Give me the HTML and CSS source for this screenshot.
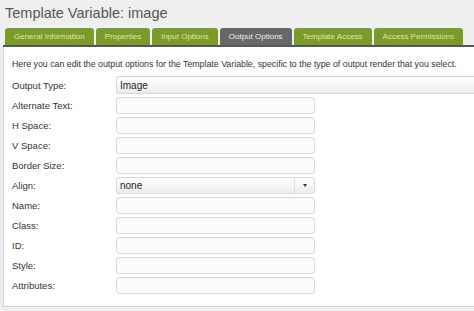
FILE: index.html
```html
<!DOCTYPE html>
<html>
<head>
<meta charset="utf-8">
<title>Template Variable: image</title>
<link rel="stylesheet" href="styles.css">
</head>
<body>
<h1 class="title">Template Variable: image</h1>
<nav class="tabs">
  <span class="tab">General Information</span>
  <span class="tab">Properties</span>
  <span class="tab">Input Options</span>
  <span class="tab active">Output Options</span>
  <span class="tab">Template Access</span>
  <span class="tab">Access Permissions</span>
</nav>
<section class="panel">
  <p class="intro">Here you can edit the output options for the Template Variable, specific to the type of output render that you select.</p>
  <div class="form">
    <div class="row row-type"><label class="lbl">Output Type:</label><div class="combo wide">Image</div></div>
    <div class="row"><label class="lbl">Alternate Text:</label><input class="field" type="text"></div>
    <div class="row"><label class="lbl">H Space:</label><input class="field" type="text"></div>
    <div class="row"><label class="lbl">V Space:</label><input class="field" type="text"></div>
    <div class="row"><label class="lbl">Border Size:</label><input class="field" type="text"></div>
    <div class="row"><label class="lbl">Align:</label><div class="combo select"><span class="sel-text">none</span><span class="sel-btn"><span class="arrow"></span></span></div></div>
    <div class="row"><label class="lbl">Name:</label><input class="field" type="text"></div>
    <div class="row"><label class="lbl">Class:</label><input class="field" type="text"></div>
    <div class="row"><label class="lbl">ID:</label><input class="field" type="text"></div>
    <div class="row"><label class="lbl">Style:</label><input class="field" type="text"></div>
    <div class="row"><label class="lbl">Attributes:</label><input class="field" type="text"></div>
  </div>
</section>
</body>
</html>
```
FILE: styles.css
```css
html, body {
  margin: 0;
  padding: 0;
  overflow: hidden;
}
body {
  width: 474px;
  height: 311px;
  background: #efefef;
  font-family: "Liberation Sans", Arial, sans-serif;
  color: #333;
}
.title {
  margin: 0;
  padding: 3px 0 0 5px;
  font-size: 14.5px;
  line-height: 20px;
  font-weight: normal;
  color: #555;
}
.tabs {
  display: flex;
  gap: 2px;
  margin: 5px 0 0 3px;
  padding-left: 2px;
  border-bottom: 2px solid #575757;
}
.tab {
  height: 17px;
  line-height: 17px;
  padding: 0 9px;
  font-size: 8px;
  color: #dbe5bc;
  background: #7b9a2c;
  border-radius: 3px 3px 0 0;
  white-space: nowrap;
}
.tab.active {
  background: #686868;
  color: #eeeeee;
}
.panel {
  margin-left: 3px;
  background: #fff;
  border-left: 1px solid #d2d2d2;
  border-bottom: 1px solid #d2d2d2;
  padding: 11px 0 0 8px;
  box-sizing: border-box;
  height: 260px;
}
.intro {
  margin: 0;
  font-size: 8.8px;
  line-height: 12px;
  color: #333;
  white-space: nowrap;
}
.form {
  margin-top: 6px;
}
.row {
  display: flex;
  align-items: center;
  height: 17px;
  margin-bottom: 3px;
}
.row-type {
  height: 18px;
}
.lbl {
  width: 104px;
  flex: none;
  font-size: 9.5px;
  color: #333;
}
.field {
  box-sizing: border-box;
  width: 199px;
  height: 17px;
  margin: 0;
  padding: 0 3px;
  border: 1px solid #dcdcdc;
  border-radius: 3px;
  background: #fbfbfb;
  box-shadow: inset 0 1px 1px rgba(0,0,0,0.03);
  outline: none;
}
.combo {
  box-sizing: border-box;
  height: 17px;
  display: flex;
  align-items: center;
  padding-left: 3px;
  font-size: 10px;
  color: #222;
  border: 1px solid #d8d8d8;
  border-radius: 3px;
  background: linear-gradient(#ffffff, #ececec);
}
.combo.wide {
  flex: 1;
  height: 18px;
  border-right: none;
  border-radius: 3px 0 0 3px;
}
.combo.select {
  width: 199px;
  padding-right: 0;
}
.sel-text {
  flex: 1;
}
.sel-btn {
  width: 19px;
  height: 100%;
  border-left: 1px solid #e0e0e0;
  display: flex;
  align-items: center;
  justify-content: center;
}
.arrow {
  width: 0;
  height: 0;
  border-left: 2px solid transparent;
  border-right: 2px solid transparent;
  border-top: 3px solid #333;
}
```
